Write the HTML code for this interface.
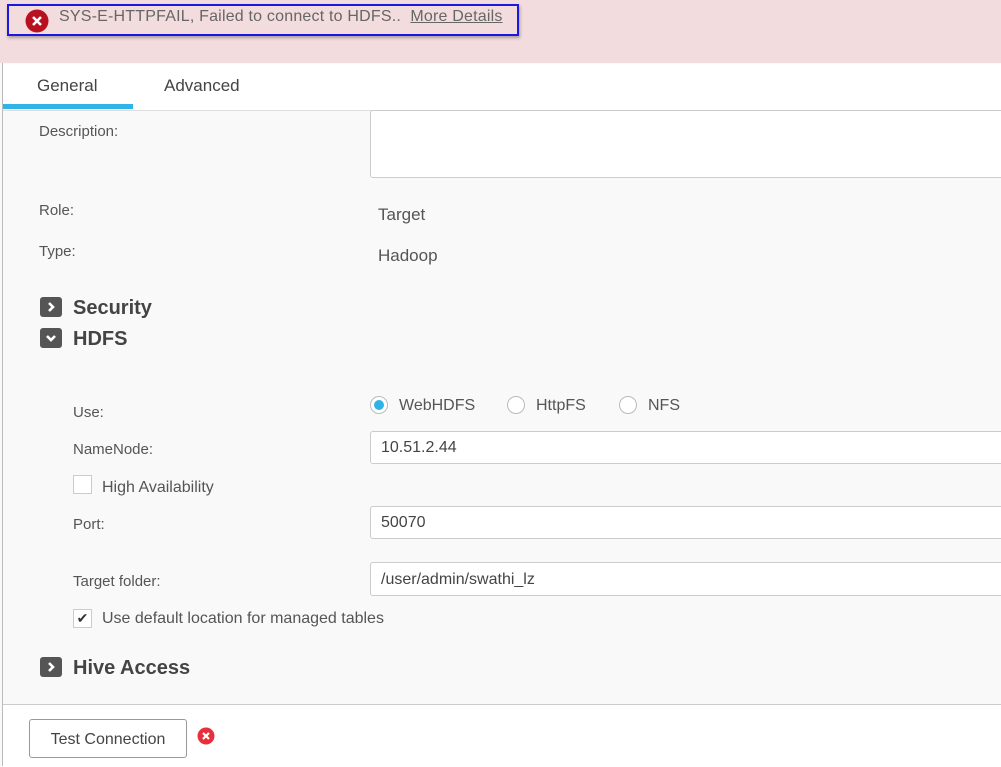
<!DOCTYPE html>
<html><head><style>
body{margin:0;width:1001px;height:766px;overflow:hidden;background:#f9f9f9;font-family:"Liberation Sans",sans-serif;color:#444;position:relative}
.a{position:absolute}
.lbl{font-size:15px;color:#555}
.inp{position:absolute;left:370px;width:640px;background:#fff;border:1px solid #ccc;border-radius:3px;box-sizing:border-box;font-size:16px;padding-left:10px;color:#444}
.sec{font-size:20px;color:#444;font-weight:bold}
.ic{position:absolute;width:22px;height:20px;background:#555;border-radius:3px;color:#fff}
.radio{position:absolute;width:18px;height:18px;border:1px solid #bbb;border-radius:50%;background:#fff;box-sizing:border-box}
.cb{position:absolute;width:19px;height:19px;border:1px solid #ccc;background:#fff;box-sizing:border-box}
</style></head><body>
<div class="a" style="left:0;top:0;width:1001px;height:63px;background:#f3dcde"></div>
<div class="a" style="left:7px;top:4px;width:512px;height:32px;border:2px solid #1a1adc;box-sizing:border-box;box-shadow:1px 2px 3px rgba(0,0,0,.3)"></div>
<svg class="a" style="left:25px;top:9px" width="24" height="24"><circle cx="12" cy="12" r="11.5" fill="#b8101e"/><path d="M8 8L16 16M16 8L8 16" stroke="#fff" stroke-width="2.6"/></svg>
<div class="a" style="left:59px;top:8px;font-size:16px;letter-spacing:0.2px;color:#666">SYS-E-HTTPFAIL, Failed to connect to HDFS..&nbsp; <span style="text-decoration:underline;color:#666">More Details</span></div>
<div class="a" style="left:2px;top:63px;width:1px;height:703px;background:#bbb"></div>
<div class="a" style="left:3px;top:64px;width:998px;height:46px;background:#fff;border-bottom:1px solid #ddd"></div>
<div class="a" style="left:3px;top:104px;width:130px;height:5px;background:#30b4e6"></div>
<div class="a" style="left:37px;top:76px;font-size:17px;color:#444">General</div>
<div class="a" style="left:164px;top:76px;font-size:17px;color:#444">Advanced</div>
<div class="a lbl" style="left:39px;top:123px">Description:</div>
<div class="inp" style="top:110px;height:68px;border-radius:3px"></div>
<div class="a lbl" style="left:39px;top:202px">Role:</div>
<div class="a" style="left:378px;top:205px;font-size:17px;color:#555">Target</div>
<div class="a lbl" style="left:39px;top:243px">Type:</div>
<div class="a" style="left:378px;top:246px;font-size:17px;color:#555">Hadoop</div>
<div class="ic" style="left:40px;top:297px"><svg width="22" height="20"><path d="M9 6L13 10L9 14" stroke="#fff" stroke-width="2.6" fill="none"/></svg></div>
<div class="a sec" style="left:73px;top:297px">Security</div>
<div class="ic" style="left:40px;top:328px"><svg width="22" height="20"><path d="M7 8L11 12L15 8" stroke="#fff" stroke-width="2.6" fill="none"/></svg></div>
<div class="a sec" style="left:73px;top:328px">HDFS</div>
<div class="a lbl" style="left:73px;top:404px">Use:</div>
<div class="radio" style="left:370px;top:396px"><div class="a" style="left:3px;top:3px;width:10px;height:10px;border-radius:50%;background:#30b4e6"></div></div>
<div class="a" style="left:399px;top:397px;font-size:16px;color:#555">WebHDFS</div>
<div class="radio" style="left:507px;top:396px"></div>
<div class="a" style="left:536px;top:397px;font-size:16px;color:#555">HttpFS</div>
<div class="radio" style="left:619px;top:396px"></div>
<div class="a" style="left:648px;top:397px;font-size:16px;color:#555">NFS</div>
<div class="a lbl" style="left:73px;top:441px">NameNode:</div>
<div class="inp" style="top:431px;height:33px;line-height:32px">10.51.2.44</div>
<div class="cb" style="left:73px;top:475px"></div>
<div class="a" style="left:102px;top:479px;font-size:16px;color:#555">High Availability</div>
<div class="a lbl" style="left:73px;top:516px">Port:</div>
<div class="inp" style="top:506px;height:33px;line-height:32px">50070</div>
<div class="a lbl" style="left:73px;top:573px">Target folder:</div>
<div class="inp" style="top:562px;height:34px;line-height:33px">/user/admin/swathi_lz</div>
<div class="cb" style="left:73px;top:609px;font-size:14px;line-height:17px;text-align:center;color:#333">✔</div>
<div class="a" style="left:102px;top:610px;font-size:16px;color:#555">Use default location for managed tables</div>
<div class="ic" style="left:40px;top:657px"><svg width="22" height="20"><path d="M9 6L13 10L9 14" stroke="#fff" stroke-width="2.6" fill="none"/></svg></div>
<div class="a sec" style="left:73px;top:657px">Hive Access</div>
<div class="a" style="left:3px;top:704px;width:998px;height:62px;background:#fff;border-top:1px solid #ccc"></div>
<div class="a" style="left:29px;top:719px;width:158px;height:39px;border:1px solid #999;border-radius:3px;background:#fff;box-sizing:border-box;text-align:center;line-height:39px;font-size:16px;color:#444">Test Connection</div>
<svg class="a" style="left:197px;top:727px" width="18" height="18"><circle cx="9" cy="9" r="8.5" fill="#e8303c"/><path d="M6 6L12 12M12 6L6 12" stroke="#fff" stroke-width="2.2"/></svg>
</body></html>
